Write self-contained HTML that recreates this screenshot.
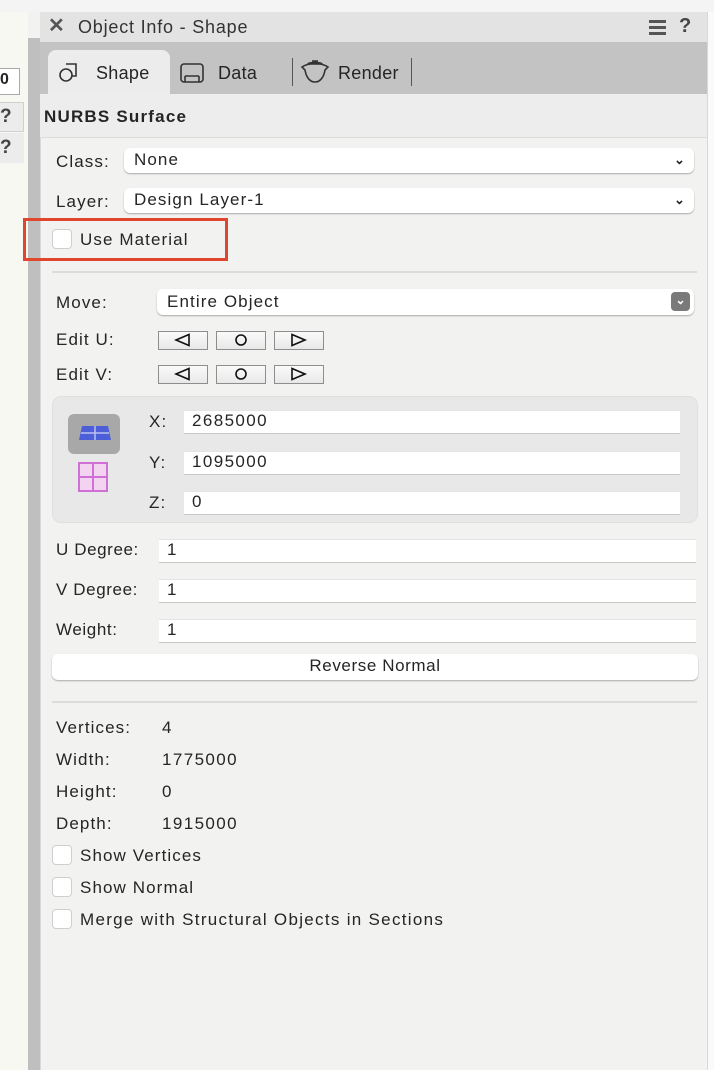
<!DOCTYPE html>
<html><head><meta charset="utf-8"><style>
*{margin:0;padding:0;box-sizing:border-box}
body{width:714px;height:1070px;overflow:hidden;position:relative;background:#f2f2f1;font-family:"Liberation Sans",sans-serif;color:#252525}
.a{position:absolute}
.t{position:absolute;font-size:17px;line-height:20px;white-space:nowrap;letter-spacing:1.1px}
.in{position:absolute;background:#fff;border-bottom:1px solid #c8c8c8;border-top:1px solid #e4e4e4;font-size:17px;line-height:20px;padding-left:8px;letter-spacing:1.4px}
.sel{position:absolute;background:#fff;border-radius:6px;box-shadow:0 1px 1.5px rgba(0,0,0,.3);font-size:17px;line-height:24px;padding-left:10px;letter-spacing:1.1px}
.btn{position:absolute;width:50px;height:19px;background:linear-gradient(#fafafa,#e8e8e8);border:1px solid #8e8e8e}
.cb{position:absolute;width:20px;height:20px;background:#fff;border:1px solid #cfcfcf;border-radius:4px}
.hr{position:absolute;height:2px;background:#dcdcdc}
.n{letter-spacing:1.4px}
</style></head><body>
<div class="a" style="left:0;top:0;width:28px;height:1070px;background:#f8f8f3"></div>
<div class="a" style="left:28px;top:38px;width:12px;height:1032px;background:#bfbfbf"></div>
<div class="a" style="left:0;top:0;width:714px;height:12px;background:#f4f4f4"></div>
<div class="a" style="left:-2px;top:68px;width:22px;height:27px;background:#fff;border:1px solid #aaa"></div>
<div class="t" style="left:0;top:70px;font-weight:bold;font-size:16px">0</div>
<div class="a" style="left:-2px;top:102px;width:26px;height:30px;background:#ececec;border:1px solid #d0d0d0"></div>
<div class="t" style="left:0;top:107px;font-weight:bold;font-size:19px;color:#444">?</div>
<div class="a" style="left:-2px;top:133px;width:26px;height:30px;background:#ececec"></div>
<div class="t" style="left:0;top:138px;font-weight:bold;font-size:19px;color:#444">?</div>
<div class="a" style="left:707px;top:12px;width:7px;height:1058px;background:#fafafa;border-left:1px solid #d8d8d8"></div>
<div class="a" style="left:40px;top:12px;width:667px;height:30px;background:#e3e3e3"></div>
<div class="t" style="left:48px;top:16px;font-size:20px;font-weight:bold;color:#555;letter-spacing:0">✕</div>
<div class="t" style="left:78px;top:17px;font-size:18px;color:#333;letter-spacing:0.8px">Object Info - Shape</div>
<div class="a" style="left:649px;top:20px;width:17px;height:3px;background:#555;box-shadow:0 6px 0 #555,0 12px 0 #555"></div>
<div class="t" style="left:679px;top:16px;font-size:20px;font-weight:bold;color:#444">?</div>
<div class="a" style="left:40px;top:42px;width:667px;height:52px;background:#c3c3c3"></div>
<div class="a" style="left:48px;top:50px;width:122px;height:44px;background:#ececec;border-radius:8px 8px 0 0"></div>
<svg class="a" style="left:58px;top:60px" width="26" height="26" viewBox="0 0 26 26" fill="none" stroke="#333" stroke-width="1.6"><circle cx="8" cy="15" r="6"/><path d="M8 4h10v12h-4"/></svg>
<div class="t" style="left:96px;top:63px;font-size:18px;letter-spacing:0.3px">Shape</div>
<svg class="a" style="left:179px;top:60px" width="26" height="26" viewBox="0 0 26 26" fill="none" stroke="#333" stroke-width="1.6"><rect x="2" y="4" width="22" height="18" rx="3"/><path d="M6 16h14M6 22v-6M20 22v-6"/></svg>
<div class="t" style="left:218px;top:63px;font-size:18px;letter-spacing:0.3px">Data</div>
<div class="a" style="left:292px;top:58px;width:1px;height:28px;background:#555"></div>
<svg class="a" style="left:298px;top:58px" width="34" height="28" viewBox="0 0 34 28" fill="none" stroke="#333" stroke-width="1.6"><path d="M14 3h6M10 6c0-2 14-2 14 0M4 9c3-2 6-3 10-3h6c4 0 7 1 10 3l-3 3c-1 6-4 12-10 12s-9-6-10-12z"/></svg>
<div class="t" style="left:338px;top:63px;font-size:18px;letter-spacing:0.3px">Render</div>
<div class="a" style="left:411px;top:58px;width:1px;height:28px;background:#555"></div>
<div class="a" style="left:40px;top:94px;width:667px;height:44px;background:#ededed;border-bottom:1px solid #dcdcdc"></div>
<div class="t" style="left:44px;top:107px;font-weight:bold;font-size:17px;letter-spacing:1.2px">NURBS Surface</div>
<div class="a" style="left:40px;top:138px;width:1px;height:932px;background:#d8d8d8"></div>
<div class="t" style="left:56px;top:152px">Class:</div>
<div class="sel" style="left:124px;top:148px;width:570px;height:25px">None<span style="position:absolute;right:8px;top:0;font-size:13px;font-weight:bold">⌄</span></div>
<div class="t" style="left:56px;top:192px">Layer:</div>
<div class="sel" style="left:124px;top:188px;width:570px;height:25px">Design Layer-1<span style="position:absolute;right:8px;top:0;font-size:13px;font-weight:bold">⌄</span></div>
<div class="a" style="left:23px;top:218px;width:205px;height:43px;border:3px solid #e0462e"></div>
<div class="cb" style="left:52px;top:229px"></div>
<div class="t" style="left:80px;top:230px">Use Material</div>
<div class="hr" style="left:52px;top:271px;width:645px"></div>
<div class="t" style="left:56px;top:293px">Move:</div>
<div class="sel" style="left:157px;top:289px;width:537px;height:26px;line-height:26px">Entire Object<span style="position:absolute;right:4px;top:3px;width:19px;height:19px;background:#7a7a7a;border-radius:4px;color:#fff;font-size:12px;line-height:16px;text-align:center;font-weight:bold;letter-spacing:0">⌄</span></div>
<div class="t" style="left:56px;top:330px">Edit U:</div>
<div class="t" style="left:56px;top:365px">Edit V:</div>
<div class="btn" style="left:158px;top:331px"></div><div class="btn" style="left:216px;top:331px"></div><div class="btn" style="left:274px;top:331px"></div>
<div class="btn" style="left:158px;top:365px"></div><div class="btn" style="left:216px;top:365px"></div><div class="btn" style="left:274px;top:365px"></div>
<svg class="a" style="left:158px;top:331px" width="170" height="60" fill="none" stroke="#111" stroke-width="1.6">
<path d="M31 3.5v11l-13-5.5z"/><circle cx="83" cy="9" r="5"/><path d="M134 3.5v11l13-5.5z"/>
<path d="M31 37.5v11l-13-5.5z"/><circle cx="83" cy="43" r="5"/><path d="M134 37.5v11l13-5.5z"/></svg>
<div class="a" style="left:52px;top:396px;width:646px;height:127px;background:#e8e8e8;border-radius:9px;border:1px solid #e0e0e0"></div>
<div class="a" style="left:68px;top:414px;width:52px;height:40px;background:#a8a8a8;border-radius:6px"></div>
<svg class="a" style="left:78px;top:424px" width="34" height="18"><path d="M4 2h26l3 14H1z" fill="#4c5ed8"/><path d="M3 9h28M17 2v14" stroke="#b9c0ef" stroke-width="1.5"/></svg>
<svg class="a" style="left:78px;top:462px" width="30" height="30" fill="#f3d4f0" stroke="#d070d6" stroke-width="2"><rect x="1" y="1" width="28" height="28"/><path d="M15 1v28M1 15h28"/></svg>
<div class="t" style="left:149px;top:412px">X:</div>
<div class="in" style="left:184px;top:410px;width:496px;height:24px">2685000</div>
<div class="t" style="left:149px;top:453px">Y:</div>
<div class="in" style="left:184px;top:451px;width:496px;height:24px">1095000</div>
<div class="t" style="left:149px;top:493px">Z:</div>
<div class="in" style="left:184px;top:491px;width:496px;height:24px">0</div>
<div class="t" style="left:56px;top:540px;letter-spacing:0.6px">U Degree:</div>
<div class="in" style="left:159px;top:539px;width:537px;height:24px">1</div>
<div class="t" style="left:56px;top:580px;letter-spacing:0.6px">V Degree:</div>
<div class="in" style="left:159px;top:579px;width:537px;height:24px">1</div>
<div class="t" style="left:56px;top:620px;letter-spacing:0.6px">Weight:</div>
<div class="in" style="left:159px;top:619px;width:537px;height:24px">1</div>
<div class="a" style="left:52px;top:654px;width:646px;height:26px;background:#fff;border-radius:6px;box-shadow:0 1px 1.5px rgba(0,0,0,.3);text-align:center;font-size:17px;line-height:24px;letter-spacing:0.6px">Reverse Normal</div>
<div class="hr" style="left:52px;top:701px;width:645px"></div>
<div class="t" style="left:56px;top:718px">Vertices:</div><div class="t n" style="left:162px;top:718px">4</div>
<div class="t" style="left:56px;top:750px">Width:</div><div class="t n" style="left:162px;top:750px">1775000</div>
<div class="t" style="left:56px;top:782px">Height:</div><div class="t n" style="left:162px;top:782px">0</div>
<div class="t" style="left:56px;top:814px">Depth:</div><div class="t n" style="left:162px;top:814px">1915000</div>
<div class="cb" style="left:52px;top:845px"></div><div class="t" style="left:80px;top:846px">Show Vertices</div>
<div class="cb" style="left:52px;top:877px"></div><div class="t" style="left:80px;top:878px">Show Normal</div>
<div class="cb" style="left:52px;top:909px"></div><div class="t" style="left:80px;top:910px;letter-spacing:1.3px">Merge with Structural Objects in Sections</div>
</body></html>
